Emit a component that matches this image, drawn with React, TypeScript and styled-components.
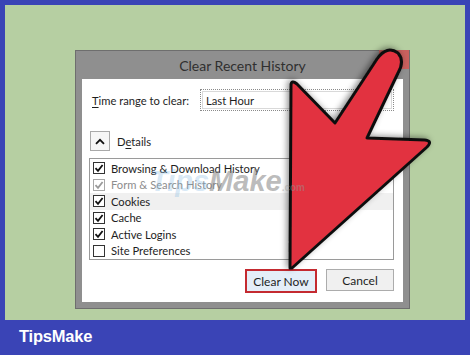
import React from "react";
import styled, { createGlobalStyle } from "styled-components";

const Global = createGlobalStyle`
  html, body { margin: 0; padding: 0; }
  body { width: 470px; height: 355px; overflow: hidden; font-family: Lato, "Open Sans", sans-serif; }
`;

const Frame = styled.div`
  position: relative;
  width: 470px;
  height: 355px;
  background: #3a44b6;
  padding: 5px 5px 0;
  box-sizing: border-box;
  display: flex;
  flex-direction: column;
`;

const Stage = styled.div`
  height: 315px;
  background: #b6cfa2;
  padding: 45px 0 0 70px;
  box-sizing: border-box;
`;

const Footer = styled.div`
  flex: 1;
  display: flex;
  align-items: center;
  padding-left: 14px;
  padding-bottom: 2px;
  font-family: "Liberation Sans", Arial, sans-serif;
  font-weight: bold;
  font-size: 16.5px;
  color: #fff;
  letter-spacing: -0.2px;
`;

const Dialog = styled.div`
  width: 335px;
  height: 259px;
  background: #8f8f8f;
  border: 1px solid #6e6e6e;
  box-sizing: border-box;
  display: flex;
  flex-direction: column;
`;

const TitleBar = styled.div`
  position: relative;
  height: 27px;
  display: flex;
  align-items: center;
  justify-content: center;
  font-family: Lato, "Open Sans", sans-serif;
  font-size: 14px;
  color: #2f2f2f;
  padding-top: 1px;
`;

const CloseBtn = styled.div`
  position: absolute;
  right: 0;
  top: -1px;
  width: 30px;
  height: 19px;
  background: #c9605e;
`;

const Body = styled.div`
  flex: 1;
  margin: 0 6px 6px;
  background: #fff;
  padding: 10px 9px 0 7px;
  display: flex;
  flex-direction: column;
  font-family: Lato, "Open Sans", sans-serif;
  font-size: 11.2px;
  color: #1e1e1e;
`;

const TimeRow = styled.div`
  display: flex;
  align-items: center;
  height: 22px;
  padding-left: 3px;
`;

const Label = styled.span`
  width: 108px;
  white-space: nowrap;
`;

const U = styled.span`
  text-decoration: underline;
  text-underline-offset: 2px;
`;

const Select = styled.div`
  flex: 1;
  height: 22px;
  box-sizing: border-box;
  border: 1px dotted #8a8a8a;
  outline: 1px solid #d9d9d9;
  outline-offset: -3px;
  display: flex;
  align-items: center;
  padding-left: 5px;
`;

const DetailsRow = styled.div`
  display: flex;
  align-items: center;
  gap: 7px;
  margin-top: 20px;
  padding-left: 1px;
`;

const ToggleBtn = styled.div`
  width: 20px;
  height: 20px;
  box-sizing: border-box;
  border: 1px solid #a9a9a9;
  background: #f6f6f6;
  display: flex;
  align-items: center;
  justify-content: center;
`;

const List = styled.div`
  margin-top: 7px;
  height: 102px;
  box-sizing: border-box;
  border: 1px solid #9a9a9a;
  padding: 1px 0 0 3px;
  display: flex;
  flex-direction: column;
`;

const Row = styled.div<{ $dim?: boolean; $hl?: boolean }>`
  height: 16.5px;
  display: flex;
  align-items: center;
  gap: 6px;
  white-space: nowrap;
  color: ${(p) => (p.$dim ? "#8d8d8d" : "#1e1e1e")};
  background: ${(p) => (p.$hl ? "#f0f0f0" : "transparent")};
  margin-left: -3px;
  padding-left: 3px;
`;

const Box = styled.div<{ $dim?: boolean }>`
  width: 12px;
  height: 12px;
  box-sizing: border-box;
  border: 1px solid ${(p) => (p.$dim ? "#a8a8a8" : "#333")};
  background: #fff;
  display: flex;
  align-items: center;
  justify-content: center;
`;

const Buttons = styled.div`
  display: flex;
  justify-content: flex-end;
  gap: 9px;
  margin-top: 9px;
`;

const Btn = styled.div<{ $primary?: boolean }>`
  height: ${(p) => (p.$primary ? "24px" : "22px")};
  width: ${(p) => (p.$primary ? "72px" : "68px")};
  box-sizing: border-box;
  border: ${(p) => (p.$primary ? "2px solid #c42a30" : "1px solid #acacac")};
  background: ${(p) => (p.$primary ? "#e4eef8" : "#f0f0f0")};
  display: flex;
  align-items: center;
  justify-content: center;
  font-size: 12px;
  color: #1e1e1e;
`;

const Watermark = styled.div`
  position: absolute;
  left: 150px;
  top: 167px;
  line-height: 1;
  font-family: "Liberation Sans", Arial, sans-serif;
  font-weight: bold;
  font-style: italic;
  font-size: 29px;
  pointer-events: none;
  white-space: nowrap;
`;

const WTips = styled.span`
  color: rgba(120, 180, 225, 0.3);
`;
const WMake = styled.span`
  color: rgba(130, 130, 130, 0.55);
`;
const WCom = styled.span`
  font-size: 10px;
  font-style: normal;
  color: rgba(150, 150, 150, 0.45);
`;

const ArrowSvg = styled.svg`
  position: absolute;
  left: 0;
  top: 0;
  pointer-events: none;
`;

const Check = ({ dim }: { dim?: boolean }) => (
  <svg width="10" height="10" viewBox="0 0 10 10">
    <path d="M1.5 5.2 L4 7.8 L8.6 2" fill="none" stroke={dim ? "#9a9a9a" : "#111"} strokeWidth="1.8" />
  </svg>
);

const items = [
  { label: "Browsing & Download History", checked: true },
  { label: "Form & Search History", checked: true, dim: true },
  { label: "Cookies", checked: true, hl: true },
  { label: "Cache", checked: true },
  { label: "Active Logins", checked: true },
  { label: "Site Preferences", checked: false },
];

export default function App() {
  return (
    <>
      <Global />
      <Frame>
        <Stage>
          <Dialog>
            <TitleBar>
              Clear Recent History
              <CloseBtn />
            </TitleBar>
            <Body>
              <TimeRow>
                <Label>
                  <U>T</U>ime range to clear:
                </Label>
                <Select>Last Hour</Select>
              </TimeRow>
              <DetailsRow>
                <ToggleBtn>
                  <svg width="10" height="7" viewBox="0 0 10 7">
                    <path d="M1 5.8 L5 1.8 L9 5.8" fill="none" stroke="#111" strokeWidth="1.8" />
                  </svg>
                </ToggleBtn>
                <span>
                  D<U>e</U>tails
                </span>
              </DetailsRow>
              <List>
                {items.map((it) => (
                  <Row key={it.label} $dim={it.dim} $hl={it.hl}>
                    <Box $dim={it.dim}>{it.checked && <Check dim={it.dim} />}</Box>
                    {it.label}
                  </Row>
                ))}
              </List>
              <Buttons>
                <Btn $primary>Clear Now</Btn>
                <Btn>Cancel</Btn>
              </Buttons>
            </Body>
          </Dialog>
        </Stage>
        <Footer>TipsMake</Footer>
        <ArrowSvg width="470" height="355" viewBox="0 0 470 355">
          <defs>
            <filter id="sh" x="-20%" y="-20%" width="140%" height="140%">
              <feDropShadow dx="-2" dy="-1" stdDeviation="3" floodColor="#000" floodOpacity="0.45" />
            </filter>
          </defs>
          <path
            d="M290 268 L291 86 Q291 79 297 84 L335 123 L377 59 Q387 45 398 53 Q405 61 398 73 L367 138 L425 140 Q433 141 427 147 L292 268 Z"
            fill="#e2323f"
            stroke="#111"
            strokeWidth="3"
            strokeLinejoin="round"
            filter="url(#sh)"
          />
        </ArrowSvg>
        <Watermark>
          <WTips>Tips</WTips>
          <WMake>Make</WMake>
          <WCom>.com</WCom>
        </Watermark>
      </Frame>
    </>
  );
}
